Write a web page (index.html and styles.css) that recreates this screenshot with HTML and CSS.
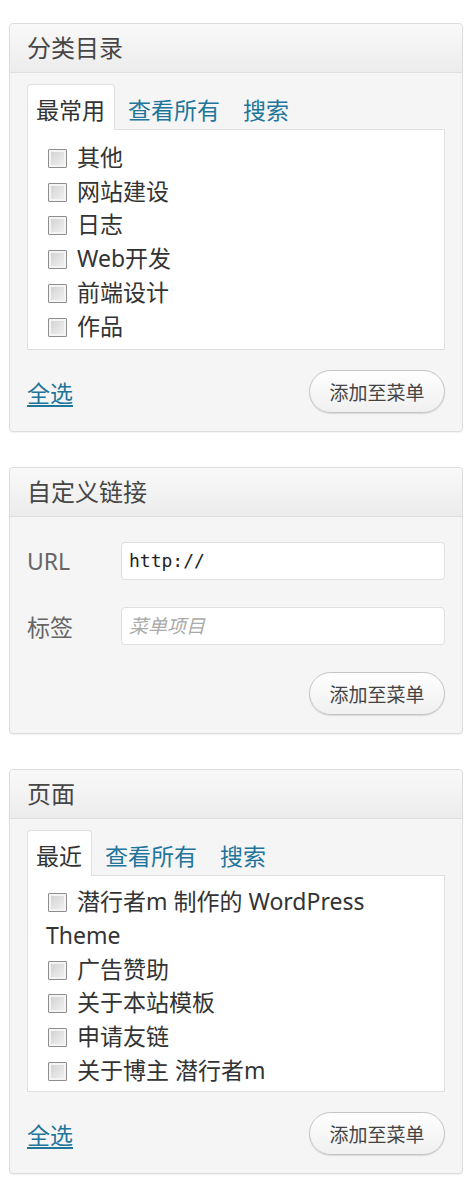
FILE: index.html
```html
<!DOCTYPE html>
<html lang="zh-CN">
<head>
<meta charset="utf-8">
<title>菜单</title>
<link rel="stylesheet" href="styles.css">
</head>
<body>
<div class="page">
  <section class="panel">
    <div class="panel-head">分类目录</div>
    <div class="panel-body">
      <div class="tabs">
        <span class="tab active">最常用</span>
        <a class="tab">查看所有</a>
        <a class="tab">搜索</a>
      </div>
      <ul class="checklist">
        <li><span class="cb"></span>其他</li>
        <li><span class="cb"></span>网站建设</li>
        <li><span class="cb"></span>日志</li>
        <li><span class="cb"></span>Web开发</li>
        <li><span class="cb"></span>前端设计</li>
        <li><span class="cb"></span>作品</li>
      </ul>
      <div class="panel-foot">
        <a class="select-all">全选</a>
        <button class="btn">添加至菜单</button>
      </div>
    </div>
  </section>

  <section class="panel">
    <div class="panel-head">自定义链接</div>
    <div class="panel-body form-body">
      <div class="field">
        <span class="field-label">URL</span>
        <div class="input mono">http://</div>
      </div>
      <div class="field">
        <span class="field-label">标签</span>
        <div class="input placeholder">菜单项目</div>
      </div>
      <div class="panel-foot end">
        <button class="btn">添加至菜单</button>
      </div>
    </div>
  </section>

  <section class="panel">
    <div class="panel-head">页面</div>
    <div class="panel-body">
      <div class="tabs">
        <span class="tab active">最近</span>
        <a class="tab">查看所有</a>
        <a class="tab">搜索</a>
      </div>
      <ul class="checklist compact">
        <li><span class="cb"></span>潜行者m 制作的 WordPress Theme</li>
        <li><span class="cb"></span>广告赞助</li>
        <li><span class="cb"></span>关于本站模板</li>
        <li><span class="cb"></span>申请友链</li>
        <li><span class="cb"></span>关于博主 潜行者m</li>
      </ul>
      <div class="panel-foot">
        <a class="select-all">全选</a>
        <button class="btn">添加至菜单</button>
      </div>
    </div>
  </section>
</div>
</body>
</html>
```

FILE: styles.css
```css
* { box-sizing: border-box; }
html, body { margin: 0; padding: 0; background: #fff; }
body {
  font-family: "Noto Sans", "Noto Sans CJK SC", sans-serif;
  color: #333;
  font-size: 23px;
}
.page {
  padding: 23px 11px 20px 9px;
  display: flex;
  flex-direction: column;
  gap: 35px;
}
.panel {
  background: #f5f5f5;
  border: 1px solid #dcdcdc;
  border-radius: 4px;
  box-shadow: 0 1px 1px rgba(0,0,0,0.05);
}
.panel-head {
  height: 49px;
  line-height: 47px;
  padding: 0 17px;
  font-size: 24px;
  color: #464646;
  background: linear-gradient(#f9f9f9, #ececec);
  border-bottom: 1px solid #dfdfdf;
  border-radius: 4px 4px 0 0;
}
.panel-body { padding: 11px 17px 18px; }
.tabs { display: flex; align-items: flex-end; height: 45px; }
.tab {
  display: block;
  height: 45px;
  padding: 5px 9px 0 8px;
  line-height: 40px;
  margin-right: 4px;
  color: #21759b;
  border: 1px solid transparent;
  border-bottom: 0;
  border-radius: 4px 4px 0 0;
}
.tab.active {
  color: #333;
  background: #fff;
  border-color: #dfdfdf;
  position: relative;
  top: 1px;
  height: 46px;
}
.checklist {
  list-style: none;
  margin: 0;
  padding: 11px 18px 6px;
  background: #fff;
  border: 1px solid #dfdfdf;
}
.checklist.compact { padding: 9px 18px 4px; }
.checklist li { line-height: 33.7px; }
.cb {
  display: inline-block;
  width: 19px;
  height: 19px;
  margin: 0 10px 0 2px;
  vertical-align: -2px;
  border: 1px solid #8e8e8e;
  border-radius: 1px;
  background: linear-gradient(135deg, #cfcfcf, #f4f4f4);
  box-shadow: inset 0 0 0 2px #f4f4f4;
}
.panel-foot {
  display: flex;
  justify-content: space-between;
  align-items: center;
  margin-top: 20px;
}
.panel-foot.end { justify-content: flex-end; margin-top: 27px; }
.select-all {
  color: #21759b;
  text-decoration: underline;
  text-underline-offset: 3px;
}
.btn {
  width: 136px;
  height: 43px;
  font-family: inherit;
  font-size: 19px;
  color: #444;
  border: 1px solid #c4c4c4;
  border-radius: 22px;
  background: linear-gradient(#fefefe, #f0f0f0);
  box-shadow: 0 1px 1px rgba(0,0,0,0.12);
  padding: 0;
}
.form-body { padding-top: 25px; }
.field {
  display: flex;
  align-items: center;
  margin-bottom: 27px;
}
.field:last-of-type { margin-bottom: 0; }
.field-label {
  width: 94px;
  color: #666;
}
.input {
  flex: 1;
  height: 38px;
  line-height: 36px;
  padding: 0 7px;
  background: #fff;
  border: 1px solid #dfdfdf;
  border-radius: 4px;
}
.input.mono {
  font-family: "DejaVu Sans Mono", monospace;
  font-size: 18px;
  color: #222;
}
.input.placeholder {
  font-size: 19px;
  font-style: italic;
  color: #aaa;
}
```
